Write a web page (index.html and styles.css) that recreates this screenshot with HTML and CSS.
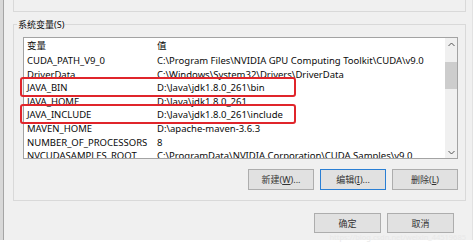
FILE: index.html
```html
<!DOCTYPE html>
<html lang="zh-CN">
  <head>
    <meta charset="UTF-8" />
    <title>环境变量</title>
    <link rel="stylesheet" href="styles.css">
  </head>
  <body>
    <div class="screen">
      <div class="edge"></div>
      <div class="dialog">
        <div class="user-group"></div>

        <div class="sys-group">
          <div class="group-title">系统变量(S)</div>

          <div class="listview">
            <div class="rows">
              <div class="row head"><span>变量</span><span>值</span></div>
              <div class="row"><span>CUDA_PATH_V9_0</span><span>C:\Program Files\NVIDIA GPU Computing Toolkit\CUDA\v9.0</span></div>
              <div class="row"><span>DriverData</span><span>C:\Windows\System32\Drivers\DriverData</span></div>
              <div class="row"><span>JAVA_BIN</span><span>D:\Java\jdk1.8.0_261\bin</span></div>
              <div class="row"><span>JAVA_HOME</span><span>D:\Java\jdk1.8.0_261</span></div>
              <div class="row"><span>JAVA_INCLUDE</span><span>D:\Java\jdk1.8.0_261\include</span></div>
              <div class="row"><span>MAVEN_HOME</span><span>D:\apache-maven-3.6.3</span></div>
              <div class="row"><span>NUMBER_OF_PROCESSORS</span><span>8</span></div>
              <div class="row"><span>NVCUDASAMPLES_ROOT</span><span>C:\ProgramData\NVIDIA Corporation\CUDA Samples\v9.0</span></div>
            </div>
            <div class="scrollbar">
              <div class="arrow">
                <svg width="7" height="5" viewBox="0 0 7 5"><polyline points="0.5,4 3.5,1 6.5,4" fill="none" stroke="#555" stroke-width="1"/></svg>
              </div>
              <div class="thumb"></div>
              <div class="arrow down">
                <svg width="7" height="5" viewBox="0 0 7 5"><polyline points="0.5,1 3.5,4 6.5,1" fill="none" stroke="#555" stroke-width="1"/></svg>
              </div>
            </div>
            <!-- red highlight marks -->
            <div class="mark mark-bin"></div>
            <div class="mark mark-include"></div>
          </div>

          <div class="buttons">
            <button class="btn">新建(<u>W</u>)...</button>
            <button class="btn focus">编辑(<u>I</u>)...</button>
            <button class="btn">删除(<u>L</u>)</button>
          </div>
        </div>

        <div class="footer">
          <button class="btn wide">确定</button>
          <button class="btn wide">取消</button>
        </div>

        <div class="watermark">https://blog.csdn.net/weixin_44519685</div>
      </div>
    </div>
  </body>
</html>
```

FILE: styles.css
```css
* {
  margin: 0;
  padding: 0;
  box-sizing: border-box;
}
body {
  background: #ffffff;
  font-family: "Noto Sans", "Noto Sans CJK SC", sans-serif;
  font-size: 9.5px;
  color: #0a0a0a;
  width: 474px;
  height: 244px;
  overflow: hidden;
}
.screen {
  display: flex;
  height: 240px;
  width: 473px;
}
.edge {
  width: 4px;
  background: #d8d8d8;
  border-right: 1px solid #a5a5a5;
}
.dialog {
  position: relative;
  width: 469px;
  background: #f0f0f0;
  padding: 0 6px 0 9px;
  border-right: 1px solid #e2e2e2;
}
.user-group {
  height: 12px;
  border: 1px solid #d9d9d9;
  border-top: none;
}
.sys-group {
  position: relative;
  margin-top: 12px;
  border: 1px solid #d9d9d9;
  padding: 0 7px 10px 9px;
  display: flex;
  flex-direction: column;
}
.group-title {
  align-self: flex-start;
  margin: -7px 0 0 -6px;
  padding: 0 1px;
  height: 13px;
  line-height: 13px;
  background: #f0f0f0;
  font-size: 9px;
}
.listview {
  position: relative;
  margin-top: 6px;
  height: 122px;
  background: #ffffff;
  border: 1px solid #a3a3a3;
  display: flex;
}
.rows {
  flex: 1;
  overflow: hidden;
}
.row {
  display: grid;
  grid-template-columns: 130px 1fr;
  height: 13.6px;
  line-height: 13.6px;
  white-space: nowrap;
}
.row span {
  padding-left: 3px;
  overflow: hidden;
}
.row.head {
  height: 16px;
  line-height: 15px;
}
.scrollbar {
  width: 12px;
  background: #f0f0f0;
  display: flex;
  flex-direction: column;
}
.arrow {
  height: 12px;
  display: flex;
  align-items: center;
  justify-content: center;
}
.arrow.down {
  margin-top: auto;
}
.thumb {
  margin-top: 12px;
  height: 27px;
  background: #cdcdcd;
}
.mark {
  position: absolute;
  left: -4px;
  width: 276px;
  height: 20px;
  border: 2px solid #e0252b;
  border-radius: 3px;
}
.mark-bin {
  top: 39px;
}
.mark-include {
  top: 66px;
}
.buttons {
  margin-top: 10px;
  display: flex;
  justify-content: flex-end;
  gap: 6px;
}
.btn {
  width: 66px;
  height: 21px;
  background: #e1e1e1;
  border: 1px solid #adadad;
  font-family: "Noto Sans", "Noto Sans CJK SC", sans-serif;
  font-size: 9px;
  color: #333333;
}
.btn.focus {
  border-color: #2a7fd4;
}
.footer {
  margin-top: 12px;
  padding-right: 12px;
  display: flex;
  justify-content: flex-end;
  gap: 6px;
}
.btn.wide {
  width: 67px;
  height: 20px;
}
.watermark {
  position: absolute;
  right: 6px;
  bottom: -2px;
  font-size: 7.5px;
  color: #e8e8e8;
}
```
